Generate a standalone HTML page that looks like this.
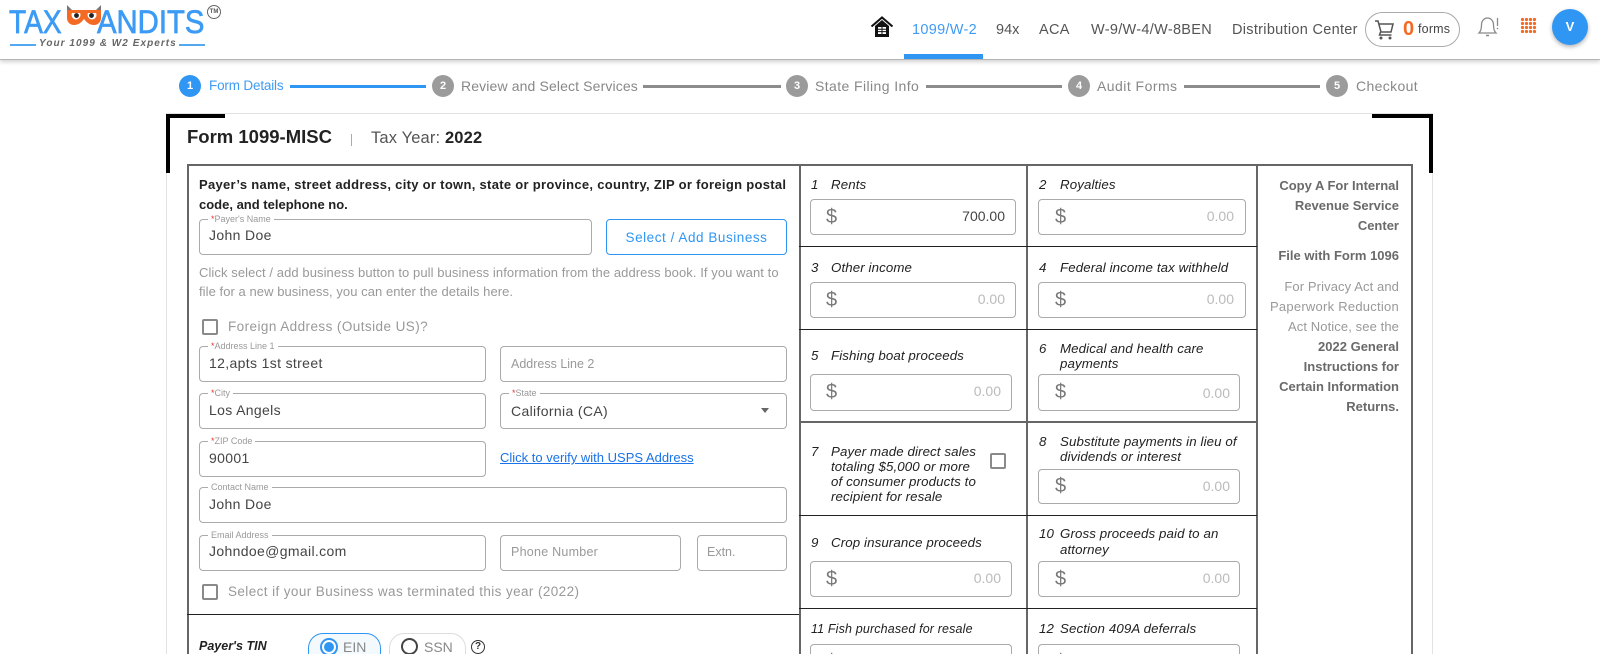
<!DOCTYPE html>
<html lang="en"><head><meta charset="utf-8"><title>Form 1099-MISC</title>
<style>
html,body{margin:0;padding:0;background:#fff;width:1600px;height:654px;overflow:hidden}
body{font-family:"Liberation Sans",sans-serif;color:#333}
#w{position:relative;width:1600px;height:654px;overflow:hidden;background:#fff}
.a,.t,.l,.r,.i,.f,.h,.v{position:absolute}
.t{white-space:nowrap;line-height:20px;height:20px}
.h{background:#222}
.v{background:#666}
.f{border:1px solid #aaa;border-radius:4px;box-sizing:border-box;background:#fff}
.lg{position:absolute;top:-6px;left:8px;background:#fff;padding:0 3px;font-size:9px;line-height:10px;color:#999;white-space:nowrap}
.lg b{color:#e33;font-weight:400}
.val{font-size:14px;color:#444;letter-spacing:.35px}
.ph{font-size:12.5px;color:#999}
.nav{font-size:14.5px;color:#555;letter-spacing:.3px}
.step{position:absolute;width:22px;height:22px;border-radius:50%;background:#9b9b9b;color:#fff;font-size:11px;font-weight:700;text-align:center;line-height:22px;top:75px}
.stx{font-size:14px;color:#888;top:76px}
.ln{position:absolute;height:3px;top:85px;background:#8c8c8c}
.lab{font-size:13.3px;font-style:italic;color:#222;letter-spacing:.1px}
.d{font-size:20px;color:#777}
.z{font-size:14px;color:#bbb;text-align:right}
.cb{position:absolute;width:16px;height:16px;box-sizing:border-box;border:2px solid #8a8a8a;border-radius:2px;background:#fff}
.rb{font-size:13px;font-weight:700;color:#6a6a6a;right:201px}
.rl{font-size:13px;color:#999;right:201px;letter-spacing:.1px}
.lo{font-size:32px;line-height:30px;height:30px;color:#3b9bf5;-webkit-text-stroke:.7px #3b9bf5;transform-origin:left center}
.cut{height:10px;border-bottom:0;border-radius:4px 4px 0 0;overflow:hidden}
</style></head><body><div id="w">

<!-- header -->
<div class="a" style="left:0;top:0;width:1600px;height:59px;background:#fff;border-bottom:1px solid #b5b5b5;box-shadow:0 2px 4px rgba(0,0,0,.18)"></div>

<!-- logo -->
<div class="t lo" style="left:9px;top:7px;transform:scaleX(.88)">TAX</div>
<svg class="a" style="left:65px;top:4px" width="38" height="23" viewBox="0 0 38 23">
<path d="M2 1l6 6H2zM36 1l-6 6h6z" fill="#777"/>
<path d="M2 6h34v8c0 4-3 7-7 7-4 0-7-2-10-6-3 4-6 6-10 6-4 0-7-3-7-7z" fill="#f26a24"/>
<circle cx="11" cy="11" r="4.500" fill="#fff"/><circle cx="27" cy="11" r="4.500" fill="#fff"/>
<circle cx="11.500" cy="11.500" r="2.400" fill="#222"/><circle cx="26.500" cy="11.500" r="2.400" fill="#222"/>
<rect x="3" y="6" width="32" height="3" fill="#f26a24"/>
</svg>
<div class="t lo" style="left:97px;top:7px;transform:scaleX(.915)">ANDITS</div>
<div class="a" style="left:207px;top:5px;width:12px;height:12px;border:1.200px solid #666;border-radius:50%;font-size:6px;line-height:12px;text-align:center;font-weight:700;color:#555">TM</div>
<div class="a" style="left:10px;top:44px;width:26px;height:1.500px;background:#52a9f2"></div>
<div class="t" style="left:39px;top:34px;font-size:10px;font-weight:700;font-style:italic;color:#666;letter-spacing:1.05px">Your 1099 &amp; W2 Experts</div>
<div class="a" style="left:179px;top:44px;width:26px;height:1.500px;background:#52a9f2"></div>

<!-- nav -->
<svg class="a" style="left:870px;top:15px" width="24" height="24" viewBox="0 0 24 24">
<path d="M1.500 11.500L12 2.500l10.500 9" fill="none" stroke="#111" stroke-width="2"/>
<path d="M5 11l7-6 7 6v11H5z" fill="#111"/>
<path d="M8 12h8v7H8z" fill="#fff"/><path d="M8 14.200h8M8 16.600h8M12 12v7" stroke="#111" stroke-width="1"/>
</svg>
<div class="t nav" style="left:912px;top:20px;color:#3f9bf3">1099/W-2</div>
<div class="a" style="left:904px;top:54px;width:79px;height:5px;background:#2f96f3"></div>
<div class="t nav" style="left:996px;top:20px;letter-spacing:0">94x</div>
<div class="t nav" style="left:1039px;top:20px">ACA</div>
<div class="t nav" style="left:1091px;top:20px">W-9/W-4/W-8BEN</div>
<div class="t nav" style="left:1232px;top:20px">Distribution Center</div>

<div class="a" style="left:1365px;top:12px;width:95px;height:35px;box-sizing:border-box;border:1px solid #aaa;border-radius:18px;background:#fff"></div>
<svg class="a" style="left:1374px;top:19px" width="21" height="21" viewBox="0 0 21 21">
<path d="M1 2h3l3 11h10l2-8H5" fill="none" stroke="#555" stroke-width="1.500"/>
<path d="M6.500 13l-1 3h12" fill="none" stroke="#555" stroke-width="1.500"/>
<circle cx="7" cy="19" r="1.500" fill="#555"/><circle cx="16" cy="19" r="1.500" fill="#555"/>
</svg>
<div class="t" style="left:1403px;top:19px;font-size:20px;font-weight:700;color:#f26a24">0</div>
<div class="t" style="left:1418px;top:19px;font-size:12.5px;color:#444;letter-spacing:.2px">forms</div>
<svg class="a" style="left:1477px;top:15px" width="22" height="23" viewBox="0 0 22 23">
<path d="M2 18c2-2 2.500-4 2.500-8 0-4 2.500-7 6-7s6 3 6 7c0 4 .5 6 2.500 8z" fill="none" stroke="#8a8a8a" stroke-width="1.300"/>
<path d="M9 20.500h3" stroke="#8a8a8a" stroke-width="1.500"/>
<path d="M20.500 3v8" stroke="#8a8a8a" stroke-width="1.300"/><circle cx="20.500" cy="13.500" r=".8" fill="#8a8a8a"/>
</svg>
<svg class="a" style="left:1520px;top:17px" width="17" height="17" viewBox="0 0 17 17" fill="#f26a24">
<circle cx="2.500" cy="2.500" r="1.600"/><circle cx="6.500" cy="2.500" r="1.600"/><circle cx="10.500" cy="2.500" r="1.600"/><circle cx="14.500" cy="2.500" r="1.600"/>
<circle cx="2.500" cy="6.500" r="1.600"/><circle cx="6.500" cy="6.500" r="1.600"/><circle cx="10.500" cy="6.500" r="1.600"/><circle cx="14.500" cy="6.500" r="1.600"/>
<circle cx="2.500" cy="10.500" r="1.600"/><circle cx="6.500" cy="10.500" r="1.600"/><circle cx="10.500" cy="10.500" r="1.600"/><circle cx="14.500" cy="10.500" r="1.600"/>
<circle cx="2.500" cy="14.500" r="1.600"/><circle cx="6.500" cy="14.500" r="1.600"/><circle cx="10.500" cy="14.500" r="1.600"/><circle cx="14.500" cy="14.500" r="1.600"/>
</svg>
<div class="a" style="left:1552px;top:9px;width:36px;height:36px;border-radius:50%;background:#2f96f3;box-shadow:0 2px 4px rgba(0,0,0,.3);color:#fff;font-size:13px;font-weight:700;text-align:center;line-height:36px">V</div>

<!-- stepper -->
<div class="step" style="left:179px;background:#2f96f3">1</div>
<div class="t stx" style="left:209px;color:#3f9bf3;font-size:13.5px;letter-spacing:-.17px">Form Details</div>
<div class="ln" style="left:290px;width:136px;background:#2f96f3"></div>
<div class="step" style="left:432px">2</div>
<div class="t stx" style="left:461px;letter-spacing:.13px">Review and Select Services</div>
<div class="ln" style="left:643px;width:138px"></div>
<div class="step" style="left:786px">3</div>
<div class="t stx" style="left:815px;letter-spacing:.41px">State Filing Info</div>
<div class="ln" style="left:926px;width:136px"></div>
<div class="step" style="left:1068px">4</div>
<div class="t stx" style="left:1097px;letter-spacing:.46px">Audit Forms</div>
<div class="ln" style="left:1184px;width:136px"></div>
<div class="step" style="left:1326px">5</div>
<div class="t stx" style="left:1356px;letter-spacing:.36px">Checkout</div>

<!-- card -->
<div class="a" style="left:166px;top:113px;width:1267px;height:541px;box-sizing:border-box;border:1px solid #e2e2e2;border-bottom:0"></div>
<div class="a" style="left:166px;top:114px;width:59px;height:4px;background:#000"></div>
<div class="a" style="left:166px;top:114px;width:4px;height:59px;background:#000"></div>
<div class="a" style="left:1372px;top:114px;width:61px;height:4px;background:#000"></div>
<div class="a" style="left:1429px;top:114px;width:4px;height:59px;background:#000"></div>

<div class="t" style="left:187px;top:127px;font-size:18.5px;font-weight:700;color:#222">Form 1099-MISC</div>
<div class="a" style="left:351px;top:134px;width:1px;height:12px;background:#aaa"></div>
<div class="t" style="left:371px;top:128px;font-size:16.5px;color:#555;letter-spacing:.15px">Tax Year: <b style="color:#222">2022</b></div>

<!-- grid -->
<div class="v" style="left:187px;top:164px;width:1226px;height:2px"></div>
<div class="v" style="left:187px;top:164px;width:2px;height:490px"></div>
<div class="v" style="left:799px;top:164px;width:2px;height:490px"></div>
<div class="v" style="left:1026px;top:164px;width:2px;height:490px"></div>
<div class="v" style="left:1256px;top:164px;width:2px;height:490px"></div>
<div class="v" style="left:1411px;top:164px;width:2px;height:490px"></div>
<div class="h" style="left:799px;top:246px;width:458px;height:1px"></div>
<div class="h" style="left:799px;top:329px;width:458px;height:1px"></div>
<div class="v" style="left:799px;top:421px;width:458px;height:2px"></div>
<div class="h" style="left:799px;top:515px;width:458px;height:1px"></div>
<div class="h" style="left:799px;top:608px;width:458px;height:1px"></div>
<div class="h" style="left:187px;top:614px;width:612px;height:1px"></div>

<!-- left cell -->
<div class="t" style="left:199px;top:175px;font-size:13px;font-weight:700;color:#222;letter-spacing:.3px">Payer’s name, street address, city or town, state or province, country, ZIP or foreign postal</div>
<div class="t" style="left:199px;top:195px;font-size:13px;font-weight:700;color:#222">code, and telephone no.</div>

<div class="f" style="left:199px;top:219px;width:393px;height:36px"><span class="lg"><b>*</b>Payer's Name</span></div>
<div class="t val" style="left:209px;top:225px">John Doe</div>
<div class="a" style="left:606px;top:219px;width:181px;height:36px;box-sizing:border-box;border:1px solid #2f96f3;border-radius:4px;color:#2f96f3;font-size:13.5px;line-height:35px;text-align:center;letter-spacing:.54px">Select / Add Business</div>
<div class="t" style="left:199px;top:263px;font-size:13px;color:#999;letter-spacing:.08px">Click select / add business button to pull business information from the address book. If you want to</div>
<div class="t" style="left:199px;top:282px;font-size:13px;color:#999;letter-spacing:.06px">file for a new business, you can enter the details here.</div>

<div class="cb" style="left:202px;top:319px"></div>
<div class="t" style="left:228px;top:317px;font-size:13.5px;color:#999;letter-spacing:.43px">Foreign Address (Outside US)?</div>

<div class="f" style="left:199px;top:346px;width:287px;height:36px"><span class="lg"><b>*</b>Address Line 1</span></div>
<div class="t val" style="left:209px;top:353px">12,apts 1st street</div>
<div class="f" style="left:500px;top:346px;width:287px;height:36px"></div>
<div class="t ph" style="left:511px;top:354px">Address Line 2</div>

<div class="f" style="left:199px;top:393px;width:287px;height:36px"><span class="lg"><b>*</b>City</span></div>
<div class="t val" style="left:209px;top:400px">Los Angels</div>
<div class="f" style="left:500px;top:393px;width:287px;height:36px"><span class="lg"><b>*</b>State</span></div>
<div class="t val" style="left:511px;top:401px">California (CA)</div>
<div class="a" style="left:761px;top:408px;width:0;height:0;border-left:4.500px solid transparent;border-right:4.500px solid transparent;border-top:5px solid #666"></div>

<div class="f" style="left:199px;top:441px;width:287px;height:36px"><span class="lg"><b>*</b>ZIP Code</span></div>
<div class="t val" style="left:209px;top:448px">90001</div>
<div class="t" style="left:500px;top:448px;font-size:13px;color:#1a73e8;text-decoration:underline">Click to verify with USPS Address</div>

<div class="f" style="left:199px;top:487px;width:588px;height:36px"><span class="lg">Contact Name</span></div>
<div class="t val" style="left:209px;top:494px">John Doe</div>

<div class="f" style="left:199px;top:535px;width:287px;height:36px"><span class="lg">Email Address</span></div>
<div class="t val" style="left:209px;top:541px">Johndoe@gmail.com</div>
<div class="f" style="left:500px;top:535px;width:181px;height:36px"></div>
<div class="t ph" style="left:511px;top:542px;letter-spacing:.25px">Phone Number</div>
<div class="f" style="left:697px;top:535px;width:90px;height:36px"></div>
<div class="t ph" style="left:707px;top:542px">Extn.</div>

<div class="cb" style="left:202px;top:584px"></div>
<div class="t" style="left:228px;top:582px;font-size:13.5px;color:#999;letter-spacing:.4px">Select if your Business was terminated this year (2022)</div>

<div class="t" style="left:199px;top:638px;height:16px;line-height:16px;font-size:12.5px;font-weight:700;font-style:italic;color:#222">Payer's TIN</div>
<div class="a" style="left:308px;top:633px;width:73px;height:21px;box-sizing:border-box;border:1px solid #2f96f3;border-bottom:0;border-radius:15px 15px 0 0;background:#f4f9fe;overflow:hidden">
<div class="a" style="left:11px;top:4px;width:18px;height:18px;box-sizing:border-box;border:2px solid #2f96f3;border-radius:50%;background:#fff"></div>
<div class="a" style="left:15px;top:8px;width:10px;height:10px;border-radius:50%;background:#2f96f3"></div>
</div>
<div class="t" style="left:343px;top:640px;height:14px;line-height:14px;font-size:14px;color:#888">EIN</div>
<div class="a" style="left:389px;top:633px;width:77px;height:21px;box-sizing:border-box;border:1px solid #ddd;border-bottom:0;border-radius:15px 15px 0 0;overflow:hidden">
<div class="a" style="left:11px;top:4px;width:17px;height:17px;box-sizing:border-box;border:2px solid #444;border-radius:50%"></div>
</div>
<div class="t" style="left:424px;top:640px;height:14px;line-height:14px;font-size:14px;color:#888">SSN</div>
<div class="a" style="left:471px;top:640px;width:14px;height:14px;box-sizing:border-box;border:1.300px solid #333;border-radius:50%;font-size:10px;line-height:12px;text-align:center;color:#333;font-weight:700">?</div>

<!-- boxes -->
<div class="t lab" style="left:811px;top:175px">1</div><div class="t lab" style="left:831px;top:175px">Rents</div>
<div class="f" style="left:810px;top:199px;width:206px;height:36px"></div>
<div class="t d" style="left:826px;top:207px">$</div>
<div class="t val" style="left:905px;width:100px;text-align:right;top:206px;letter-spacing:0">700.00</div>

<div class="t lab" style="left:1039px;top:175px">2</div><div class="t lab" style="left:1060px;top:175px">Royalties</div>
<div class="f" style="left:1038px;top:199px;width:208px;height:36px"></div>
<div class="t d" style="left:1055px;top:207px">$</div>
<div class="t z" style="left:1134px;width:100px;top:206px">0.00</div>

<div class="t lab" style="left:811px;top:258px">3</div><div class="t lab" style="left:831px;top:258px">Other income</div>
<div class="f" style="left:810px;top:282px;width:206px;height:36px"></div>
<div class="t d" style="left:826px;top:290px">$</div>
<div class="t z" style="left:905px;width:100px;top:289px">0.00</div>

<div class="t lab" style="left:1039px;top:258px">4</div><div class="t lab" style="left:1060px;top:258px">Federal income tax withheld</div>
<div class="f" style="left:1038px;top:282px;width:208px;height:36px"></div>
<div class="t d" style="left:1055px;top:290px">$</div>
<div class="t z" style="left:1134px;width:100px;top:289px">0.00</div>

<div class="t lab" style="left:811px;top:346px">5</div><div class="t lab" style="left:831px;top:346px">Fishing boat proceeds</div>
<div class="f" style="left:810px;top:374px;width:202px;height:37px"></div>
<div class="t d" style="left:826px;top:382px">$</div>
<div class="t z" style="left:901px;width:100px;top:381px">0.00</div>

<div class="t lab" style="left:1039px;top:339px">6</div><div class="t lab" style="left:1060px;top:339px">Medical and health care</div>
<div class="t lab" style="left:1060px;top:354px">payments</div>
<div class="f" style="left:1038px;top:374px;width:202px;height:37px"></div>
<div class="t d" style="left:1055px;top:382px">$</div>
<div class="t z" style="left:1130px;width:100px;top:383px">0.00</div>

<div class="t lab" style="left:811px;top:442px">7</div><div class="t lab" style="left:831px;top:442px">Payer made direct sales</div>
<div class="t lab" style="left:831px;top:457px">totaling $5,000 or more</div>
<div class="t lab" style="left:831px;top:472px">of consumer products to</div>
<div class="t lab" style="left:831px;top:487px">recipient for resale</div>
<div class="cb" style="left:990px;top:453px"></div>

<div class="t lab" style="left:1039px;top:432px">8</div><div class="t lab" style="left:1060px;top:432px">Substitute payments in lieu of</div>
<div class="t lab" style="left:1060px;top:447px">dividends or interest</div>
<div class="f" style="left:1038px;top:469px;width:202px;height:35px"></div>
<div class="t d" style="left:1055px;top:476px">$</div>
<div class="t z" style="left:1130px;width:100px;top:476px">0.00</div>

<div class="t lab" style="left:811px;top:533px">9</div><div class="t lab" style="left:831px;top:533px">Crop insurance proceeds</div>
<div class="f" style="left:810px;top:561px;width:202px;height:36px"></div>
<div class="t d" style="left:826px;top:569px">$</div>
<div class="t z" style="left:901px;width:100px;top:568px">0.00</div>

<div class="t lab" style="left:1039px;top:524px">10</div><div class="t lab" style="left:1060px;top:524px">Gross proceeds paid to an</div>
<div class="t lab" style="left:1060px;top:540px">attorney</div>
<div class="f" style="left:1038px;top:561px;width:202px;height:36px"></div>
<div class="t d" style="left:1055px;top:569px">$</div>
<div class="t z" style="left:1130px;width:100px;top:568px">0.00</div>

<div class="t lab" style="left:811px;top:619px;font-size:12.5px;letter-spacing:.15px">11 Fish purchased for resale</div>
<div class="f cut" style="left:810px;top:644px;width:202px"><div class="t d" style="left:15px;top:7px">$</div></div>
<div class="t lab" style="left:1039px;top:619px">12</div><div class="t lab" style="left:1060px;top:619px">Section 409A deferrals</div>
<div class="f cut" style="left:1038px;top:644px;width:202px"><div class="t d" style="left:16px;top:7px">$</div></div>

<!-- right col -->
<div class="t rb" style="top:176px">Copy A For Internal</div>
<div class="t rb" style="top:196px">Revenue Service</div>
<div class="t rb" style="top:216px">Center</div>
<div class="t rb" style="top:246px">File with Form 1096</div>
<div class="t rl" style="top:277px">For Privacy Act and</div>
<div class="t rl" style="top:297px;letter-spacing:.25px">Paperwork Reduction</div>
<div class="t rl" style="top:317px">Act Notice, see the</div>
<div class="t rb" style="top:337px">2022 General</div>
<div class="t rb" style="top:357px">Instructions for</div>
<div class="t rb" style="top:377px">Certain Information</div>
<div class="t rb" style="top:397px">Returns.</div>

</div></body></html>
